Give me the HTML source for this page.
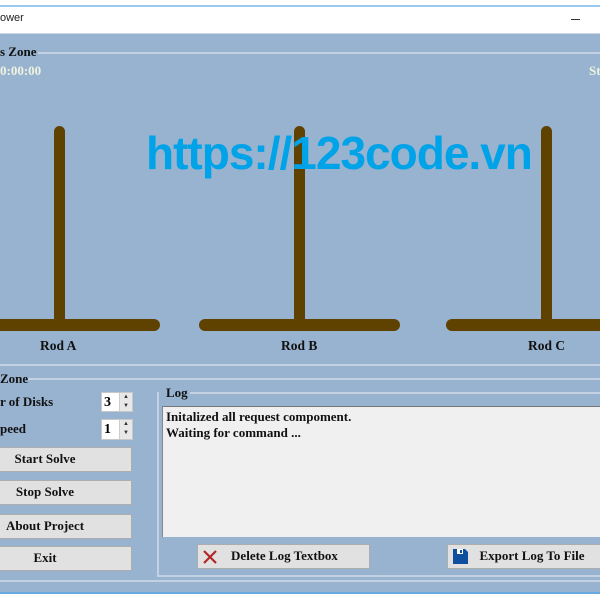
<!DOCTYPE html>
<html><head><style>
body{margin:0;width:600px;height:600px;overflow:hidden;background:#fff;position:relative;font-family:"Liberation Serif",serif;}
div,span{position:absolute;box-sizing:border-box;}
.b{font-weight:bold;color:#111;}
.hl{height:2px;background:#c3d1e2;}
.vl{width:2px;background:#c3d1e2;}
.rod{background:#5f4100;border-radius:6px;}
.btn{background:#e1e1e1;border:1px solid #adadad;font-weight:bold;font-size:13px;color:#111;text-align:center;line-height:22px;}
.sp{background:#fff;border:1px solid #c8c8c8;font-weight:bold;font-size:14px;padding-left:2px;line-height:19px;}
.ar{right:0;width:13px;background:#e8e8e8;border-left:1px solid #ccc;font-size:6px;text-align:center;color:#333;}
</style></head><body>
<div style="left:0;top:5px;width:600px;height:2px;background:#99c9f0"></div>
<div style="left:0;top:12px;font-family:'Liberation Sans',sans-serif;font-size:11px;color:#222">ower</div>
<div style="left:571px;top:19px;width:9px;height:1px;background:#333"></div>
<div style="left:0;top:33px;width:600px;height:1px;background:#c9d6e6"></div>
<div style="left:0;top:34px;width:600px;height:558px;background:#98b3d0"></div>
<div class="hl" style="left:38px;top:52px;width:562px"></div>
<div class="b" style="left:0;top:44px;font-size:13px">s Zone</div>
<div class="b" style="left:0;top:63px;font-size:13px;color:#eef3df">0:00:00</div>
<div class="b" style="left:589px;top:63px;font-size:13px;color:#eef3df">St</div>
<div class="rod" style="left:54px;top:126px;width:11px;height:200px"></div>
<div class="rod" style="left:294px;top:126px;width:11px;height:200px"></div>
<div class="rod" style="left:541px;top:126px;width:11px;height:200px"></div>
<div class="rod" style="left:-8px;top:319px;width:168px;height:12px"></div>
<div class="rod" style="left:199px;top:319px;width:201px;height:12px"></div>
<div class="rod" style="left:446px;top:319px;width:170px;height:12px"></div>
<div class="b" style="left:40px;top:338px;font-size:13.5px">Rod A</div>
<div class="b" style="left:281px;top:338px;font-size:13.5px">Rod B</div>
<div class="b" style="left:528px;top:338px;font-size:13.5px">Rod C</div>
<div style="left:146px;top:126px;font-family:'Liberation Sans',sans-serif;font-weight:bold;font-size:46px;letter-spacing:-1px;color:#00a2e8;white-space:nowrap">https://123code.vn</div>
<div class="hl" style="left:0;top:364px;width:600px"></div>
<div class="hl" style="left:26px;top:378px;width:574px"></div>
<div class="b" style="left:0;top:371px;font-size:13px">Zone</div>
<div class="hl" style="left:190px;top:392px;width:410px"></div>
<div class="vl" style="left:157px;top:392px;height:185px"></div>
<div class="b" style="left:166px;top:385px;font-size:13px">Log</div>
<div class="hl" style="left:157px;top:575px;width:443px"></div>
<div class="hl" style="left:0;top:580px;width:600px"></div>
<div class="b" style="left:0;top:394px;font-size:13px">r of Disks</div>
<div class="b" style="left:0;top:421px;font-size:13px">peed</div>
<div class="sp" style="left:101px;top:392px;width:32px;height:20px">3<div class="ar" style="top:0;height:18px;line-height:9px">▲<br>▼</div></div>
<div class="sp" style="left:101px;top:419px;width:32px;height:21px">1<div class="ar" style="top:0;height:19px;line-height:9px">▲<br>▼</div></div>
<div class="btn" style="left:-42px;top:447px;width:174px;height:25px">Start Solve</div>
<div class="btn" style="left:-42px;top:480px;width:174px;height:25px">Stop Solve</div>
<div class="btn" style="left:-42px;top:514px;width:174px;height:25px">About Project</div>
<div class="btn" style="left:-42px;top:546px;width:174px;height:25px">Exit</div>
<div style="left:162px;top:406px;width:440px;height:131px;background:#f0f0f0;border-top:1px solid #777;border-left:1px solid #888;font-weight:bold;font-size:13px;line-height:16px;padding:2px 3px;color:#111">Initalized all request compoment.<br>Waiting for command ...</div>
<div class="btn" style="left:197px;top:544px;width:173px;height:25px;padding-left:2px">Delete Log Textbox
<svg style="position:absolute;left:5px;top:5px" width="14" height="14"><path d="M1 1L13 13M13 1L1 13" stroke="#b3262a" stroke-width="2.2"/></svg></div>
<div class="btn" style="left:447px;top:544px;width:170px;height:25px">Export Log To File
<svg style="position:absolute;left:5px;top:4px" width="15" height="15"><path d="M0 0H12L15 3V15H0Z" fill="#0f4fa0"/><rect x="4" y="0" width="6" height="5" fill="#fff"/><rect x="7" y="1" width="2" height="3" fill="#0f4fa0"/></svg></div>
<div style="left:0;top:592px;width:600px;height:2px;background:#6aa8e0"></div>
</body></html>
